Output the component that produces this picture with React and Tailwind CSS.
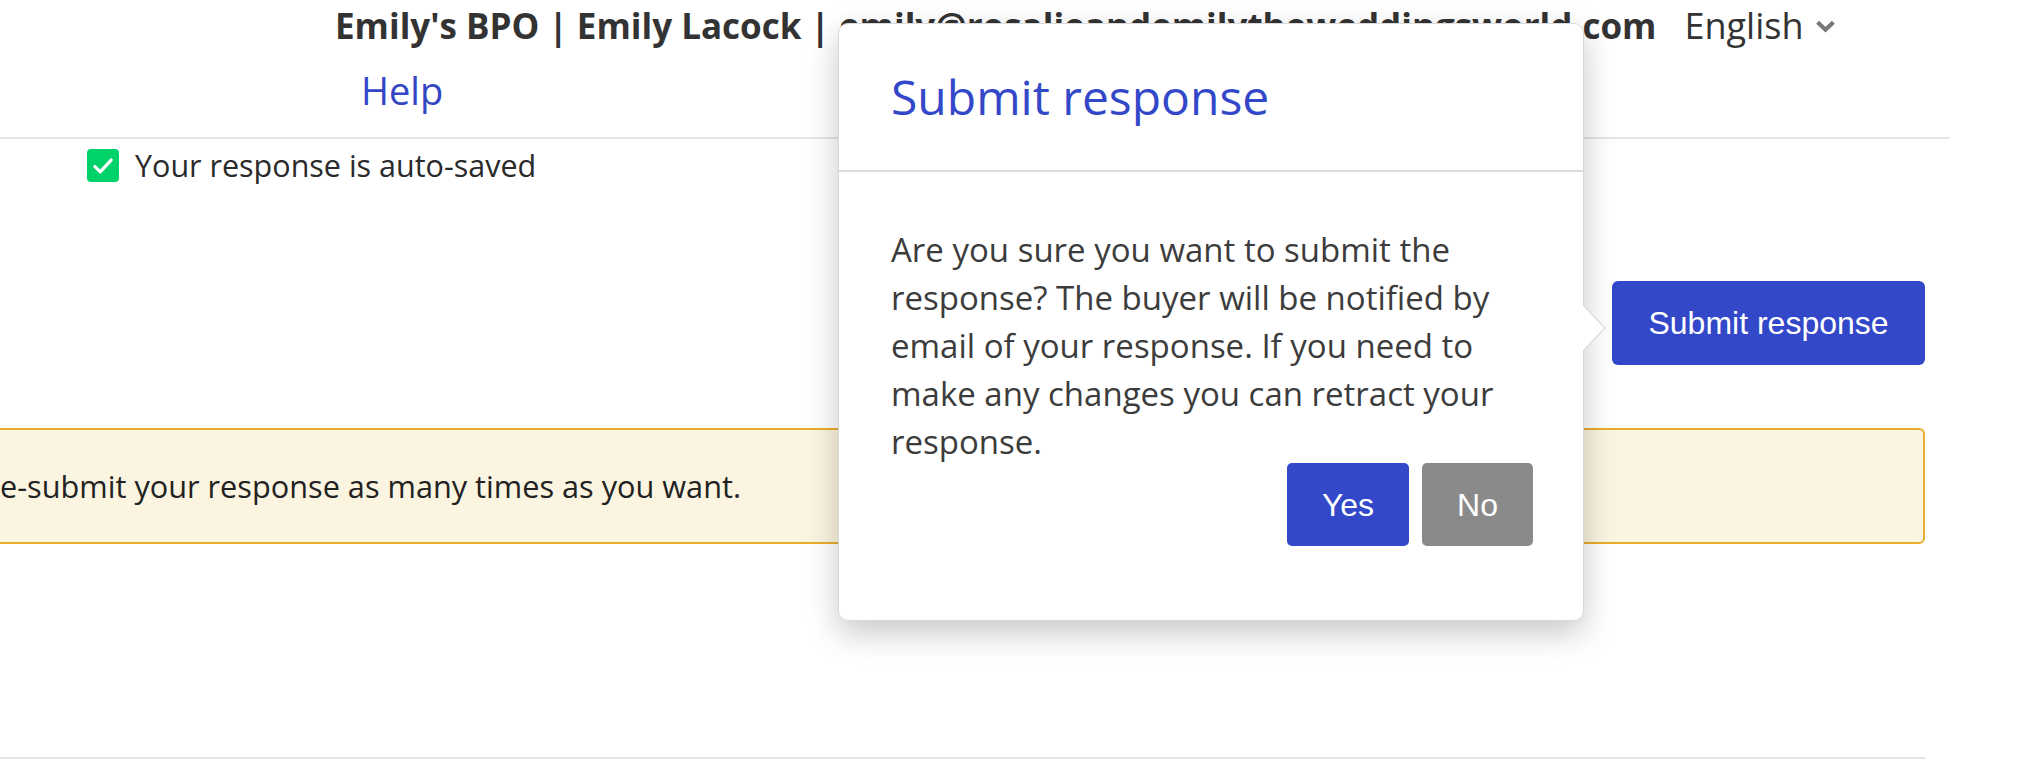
import React from 'react';

const Check = () => (
    <svg viewBox="0 0 24 24" className="w-[26px] h-[26px]" fill="none" stroke="white" strokeWidth="3" strokeLinecap="round" strokeLinejoin="round">
        <path d="M4.5 12.5l5 5L19.5 6.5" />
    </svg>
);

const App = () => {
    return (
        <div className="relative w-[2020px] h-[772px] overflow-hidden bg-white font-['Open_Sans',sans-serif] text-[#333]">
            {/* Top header */}
            <header className="w-[1950px] h-[139px] border-b-2 border-[#e2e4ea] pl-[335px] pt-[8px]">
                <div className="flex items-baseline whitespace-nowrap leading-none">
                    <span className="text-[35px] font-bold">
                        Emily's BPO | Emily Lacock | emily@rosalieandemilytheweddingsworld.com
                    </span>
                    <span className="ml-[28px] text-[36px]">English</span>
                    <svg viewBox="0 0 22 14" className="ml-[12px] w-[21px] h-[13px] self-center" fill="none" stroke="#777" strokeWidth="4.5">
                        <path d="M2.5 2.5l8.5 8 8.5-8" />
                    </svg>
                </div>
                <a className="block mt-[27px] ml-[26px] text-[38px] leading-none text-[#3346c6]">Help</a>
            </header>

            <main className="w-[1925px]">
                {/* Autosave notice */}
                <div className="flex items-center h-[33px] mt-[10px] pl-[87px]">
                    <div className="w-[32px] h-[33px] rounded-[4px] bg-[#00d26a] flex items-center justify-center">
                        <Check />
                    </div>
                    <span className="ml-[16px] text-[30.5px] leading-none text-[#2a2a2a]">Your response is auto-saved</span>
                </div>

                {/* Submit */}
                <div className="flex justify-end mt-[99px]">
                    <button className="w-[313px] h-[84px] rounded-[6px] bg-[#3348c8] text-white text-[32px] font-['Liberation_Sans',Arial,sans-serif]">
                        Submit response
                    </button>
                </div>

                {/* Warning banner */}
                <div className="mt-[63px] h-[116px] border-2 border-l-0 border-[#e8ad2c] bg-[#fbf4e0] rounded-r-[6px] flex items-center">
                    <span className="text-[30.7px] leading-none text-[#222] whitespace-nowrap">e-submit your response as many times as you want.</span>
                </div>

                <div className="mt-[213px] h-[2px] bg-[#e2e4ea]" />
            </main>

            {/* Confirmation popover */}
            <div className="absolute left-[838px] top-[23px] w-[746px] h-[598px] bg-white rounded-[10px] border border-[#d9d9d9] shadow-[0_12px_32px_rgba(0,0,0,0.22)]">
                <div className="h-[148px] border-b-2 border-[#dcdcdc] flex items-center pl-[52px]">
                    <h2 className="text-[48px] leading-none text-[#3348c8]">Submit response</h2>
                </div>
                <div className="pl-[52px] pr-[50px] pt-[54px]">
                    <p className="text-[33px] leading-[48px] text-[#3c3c3c] whitespace-nowrap">
                        Are you sure you want to submit the<br />
                        response? The buyer will be notified by<br />
                        email of your response. If you need to<br />
                        make any changes you can retract your<br />
                        response.
                    </p>
                    <div className="flex justify-end gap-[13px] -mt-[3px] font-['Liberation_Sans',Arial,sans-serif]">
                        <button className="w-[122px] h-[83px] rounded-[5px] bg-[#3348c8] text-white text-[32px]">Yes</button>
                        <button className="w-[111px] h-[83px] rounded-[5px] bg-[#8a8a8a] text-white text-[32px]">No</button>
                    </div>
                </div>
                <svg className="absolute left-[744px] top-[281px] w-[24px] h-[46px]" viewBox="0 0 24 46">
                    <path d="M0 0 L22 23 L0 46" fill="white" stroke="#d9d9d9" strokeWidth="1.2" />
                </svg>
            </div>
        </div>
    );
};

export default App;
